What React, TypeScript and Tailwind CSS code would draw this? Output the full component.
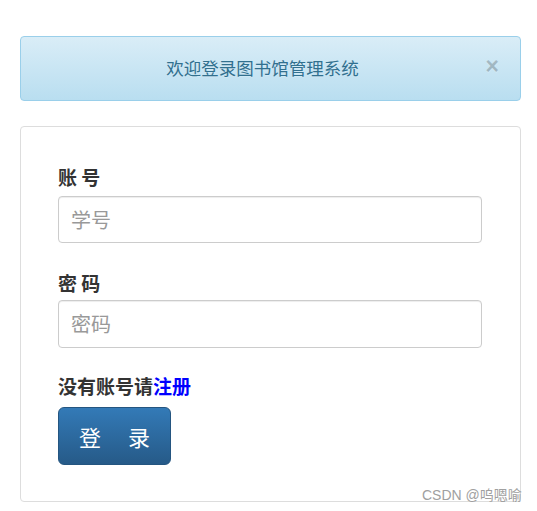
import React from "react";

const cjk = { fontFamily: '"Noto Sans CJK SC", "Noto Sans", sans-serif' };

export default function App() {
  return (
    <div className="relative min-h-[511px] w-[537px] bg-white" style={cjk}>
      <div className="pt-[36px] pl-[20px] w-[521px]">
        <div className="relative flex h-[65px] items-center justify-center rounded-[4px] border border-[#9acfea] bg-gradient-to-b from-[#d9edf7] to-[#b9def0] pl-[19px] pr-[35px] text-[17.5px] text-[#31708f] [text-shadow:0_1px_0_rgba(255,255,255,0.2)]">
          <span>欢迎登录图书馆管理系统</span>
          <span
            className="absolute right-[21px] top-[18px] text-[23px] font-bold leading-none text-black opacity-20 [text-shadow:0_1px_0_#fff]"
            style={{ fontFamily: '"Liberation Sans", Arial, sans-serif' }}
          >
            ×
          </span>
        </div>

        <div className="mt-[25px] rounded-[4px] border border-[#dddddd] bg-white px-[37px] pt-[37px] pb-[36px]">
          <div className="text-[19px] font-bold leading-[26px] text-[#333333]">账 号</div>
          <div className="mt-[6px] flex h-[47px] w-[424px] items-center rounded-[4px] border border-[#cccccc] px-[12px] text-[20px] text-[#999999] shadow-[inset_0_1px_1px_rgba(0,0,0,0.075)]">
            学号
          </div>

          <div className="mt-[27px] text-[19px] font-bold leading-[26px] text-[#333333]">密 码</div>
          <div className="mt-[4px] flex h-[48px] w-[424px] items-center rounded-[4px] border border-[#cccccc] px-[12px] text-[20px] text-[#999999] shadow-[inset_0_1px_1px_rgba(0,0,0,0.075)]">
            密码
          </div>

          <div className="mt-[25px] text-[19px] font-bold leading-[26px] text-[#333333]">
            没有账号请<span className="text-[#0000ff]">注册</span>
          </div>

          <div className="mt-[8px] flex h-[58px] w-[113px] items-center justify-center gap-[27px] rounded-[6px] border border-[#245580] bg-gradient-to-b from-[#337ab7] to-[#265a88] text-[22px] text-white">
            <span>登</span>
            <span>录</span>
          </div>
        </div>
      </div>

      <div
        className="absolute left-[422px] top-[486px] text-[14px] leading-[18px] text-[#a0a0a0]"
        style={{ fontFamily: '"Liberation Sans", "Noto Sans CJK SC", sans-serif' }}
      >
        CSDN @呜嗯喻
      </div>
    </div>
  );
}
